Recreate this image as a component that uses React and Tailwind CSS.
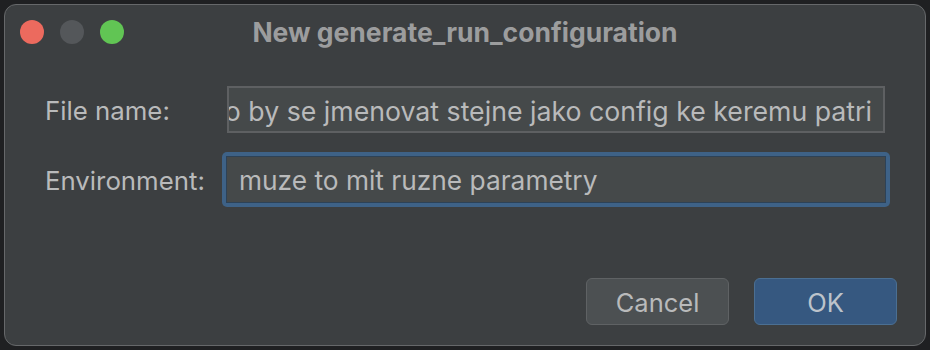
export default function App() {
  const font = { fontFamily: 'Inter, "Noto Sans", sans-serif' };
  return (
    <div className="w-[930px] h-[350px] bg-[#1f2022] p-[4px]" style={font}>
      <div className="h-[342px] rounded-[12px] border border-[#66686a] bg-[#3c3f41] flex flex-col overflow-hidden">
        <div className="h-[54px] grid grid-cols-[1fr_auto_1fr] items-center">
          <div className="flex items-center gap-[16px] pl-[15px]">
            <span className="w-[24px] h-[24px] rounded-full bg-[#ec6a5e]" />
            <span className="w-[24px] h-[24px] rounded-full bg-[#54575a]" />
            <span className="w-[24px] h-[24px] rounded-full bg-[#61c554]" />
          </div>
          <div className="text-[26.5px] font-bold text-[#9c9d9e] leading-none">New generate_run_configuration</div>
          <div />
        </div>
        <div className="pt-[27px] pl-[40px] grid grid-cols-[182px_668px] items-center gap-y-[19px]">
          <div className="text-[25.8px] text-[#b9babb] leading-none pt-[3px]">File name:</div>
          <div className="w-[658px] h-[47px] border-2 border-[#5e6062] bg-[#45494a] flex items-center justify-end overflow-hidden pr-[11px]">
            <span className="text-[26.7px] text-[#b9babb] whitespace-nowrap leading-none pt-[3px]">mělo by se jmenovat stejne jako config ke keremu patri</span>
          </div>
          <div className="text-[25.8px] text-[#b9babb] leading-none pt-[3px]">Environment:</div>
          <div className="-ml-[5px] w-[668px] h-[55px] rounded-[5px] bg-[#3e6287] p-[4px]">
            <div className="w-full h-full border border-[#2d4257] bg-[#45494a] flex items-center pl-[12px]">
              <span className="text-[26.3px] text-[#b9babb] whitespace-nowrap leading-none pt-[3px]">muze to mit ruzne parametry</span>
            </div>
          </div>
        </div>
        <div className="flex-1" />
        <div className="flex justify-end gap-[25px] pr-[28px] pb-[20px]">
          <button className="w-[143px] h-[47px] rounded-[6px] border border-[#5f6264] bg-[#4c5052] text-[25.5px] text-[#b9babb] leading-none pt-[2px]">Cancel</button>
          <button className="w-[143px] h-[47px] rounded-[6px] border border-[#4b6f92] bg-[#365880] text-[25.5px] text-[#bcc3cb] leading-none pt-[2px]">OK</button>
        </div>
      </div>
    </div>
  );
}
